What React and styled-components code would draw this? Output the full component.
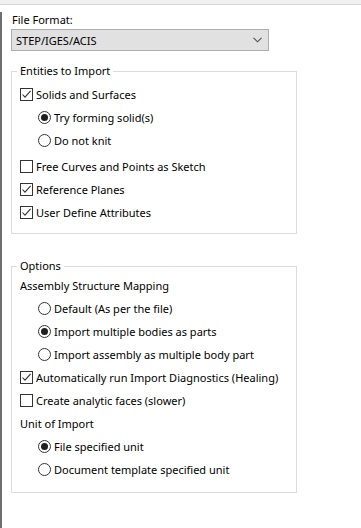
import React from "react";
import styled, { createGlobalStyle } from "styled-components";

const Global = createGlobalStyle`
  html, body { margin: 0; padding: 0; background: #ffffff; }
  body {
    font-family: "Noto Sans", "Open Sans", Arial, sans-serif;
    font-size: 11px;
    color: #000000;
    width: 361px;
    height: 528px;
    overflow: hidden;
  }
`;

const TopStrip = styled.div`
  height: 4px;
  background: #f0f0f0;
  border-bottom: 1px solid #d6d6d6;
`;

const Panel = styled.div`
  margin-top: 7px;
  border-left: 2px solid #6e6e6e;
  padding-left: 9px;
  height: 516px;
  box-sizing: border-box;
`;

const FieldLabel = styled.div`
  line-height: 16px;
  height: 17px;
  padding-left: 1px;
`;

const Select = styled.div`
  box-sizing: border-box;
  width: 258px;
  height: 22px;
  background: #e1e1e1;
  border: 1px solid #adadad;
  display: flex;
  align-items: center;
  justify-content: space-between;
  padding: 0 6px 0 4px;
`;

const Chevron = () => (
  <svg width="9" height="6" viewBox="0 0 9 6">
    <polyline points="0.5,0.8 4.5,4.8 8.5,0.8" fill="none" stroke="#505050" strokeWidth="1.1" />
  </svg>
);

const Group = styled.fieldset`
  box-sizing: border-box;
  width: 286px;
  margin: ${(p) => p.$top}px 0 0 0;
  padding: ${(p) => p.$padTop}px 0 ${(p) => p.$padBottom}px 8px;
  border: 1px solid #dcdcdc;
  min-inline-size: 0;
`;

const Legend = styled.legend`
  line-height: 16px;
  padding: 0 3px;
  margin-left: -3px;
`;

const Row = styled.div`
  display: flex;
  align-items: center;
  height: ${(p) => p.$h || 23}px;
  padding-left: ${(p) => (p.$indent ? 18 : 0)}px;
  gap: 3px;
  white-space: nowrap;
`;

const Spacer = styled.div`
  height: ${(p) => p.$h}px;
`;

const Box = styled.span`
  box-sizing: border-box;
  width: 13px;
  height: 13px;
  border: 1px solid #333333;
  background: #ffffff;
  display: inline-flex;
  align-items: center;
  justify-content: center;
  flex: none;
`;

const Circle = styled.span`
  box-sizing: border-box;
  width: 13px;
  height: 13px;
  border: 1px solid #333333;
  border-radius: 50%;
  background: #ffffff;
  display: inline-flex;
  align-items: center;
  justify-content: center;
  flex: none;
`;

const Dot = styled.span`
  width: 7px;
  height: 7px;
  border-radius: 50%;
  background: #1f1f1f;
`;

const Label = styled.span`
  line-height: 16px;
`;

const Check = ({ checked, children }) => (
  <Row>
    <Box>
      {checked && (
        <svg width="11" height="11" viewBox="0 0 11 11">
          <polyline points="1.5,5.5 4,8.2 9.6,1.8" fill="none" stroke="#333333" strokeWidth="1.1" />
        </svg>
      )}
    </Box>
    <Label>{children}</Label>
  </Row>
);

const Radio = ({ checked, children }) => (
  <Row $indent>
    <Circle>{checked && <Dot />}</Circle>
    <Label>{children}</Label>
  </Row>
);

const Text = ({ children }) => (
  <Row>
    <Label>{children}</Label>
  </Row>
);

export default function App() {
  return (
    <>
      <Global />
      <TopStrip />
      <Panel>
        <FieldLabel>File Format:</FieldLabel>
        <Select>
          <span>STEP/IGES/ACIS</span>
          <Chevron />
        </Select>
        <Group $top={12} $padTop={4} $padBottom={9}>
          <Legend>Entities to Import</Legend>
          <Check checked>Solids and Surfaces</Check>
          <Radio checked>Try forming solid(s)</Radio>
          <Radio>Do not knit</Radio>
          <Spacer $h={3} />
          <Check>Free Curves and Points as Sketch</Check>
          <Check checked>Reference Planes</Check>
          <Check checked>User Define Attributes</Check>
        </Group>
        <Group $top={24} $padTop={0} $padBottom={11}>
          <Legend>Options</Legend>
          <Text>Assembly Structure Mapping</Text>
          <Radio>Default (As per the file)</Radio>
          <Radio checked>Import multiple bodies as parts</Radio>
          <Radio>Import assembly as multiple body part</Radio>
          <Check checked>Automatically run Import Diagnostics (Healing)</Check>
          <Check>Create analytic faces (slower)</Check>
          <Text>Unit of Import</Text>
          <Radio checked>File specified unit</Radio>
          <Radio>Document template specified unit</Radio>
        </Group>
      </Panel>
    </>
  );
}
